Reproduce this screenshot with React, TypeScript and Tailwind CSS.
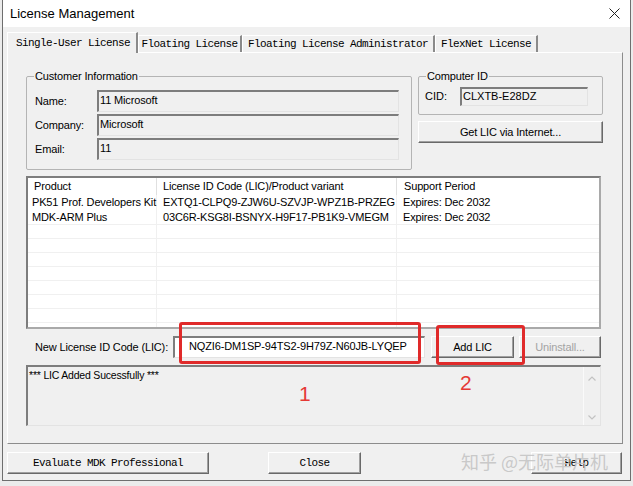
import React from 'react';

const sans = "font-['Liberation_Sans',Arial,sans-serif]";
const mono = "font-['Liberation_Mono','Courier_New',monospace]";

// classic win32 3D edges
const sunken =
  'border-t-2 border-l-2 border-r border-b border-t-[#7d7d7d] border-l-[#7d7d7d] border-r-[#e3e3e3] border-b-[#e3e3e3]';
const raised =
  'border border-t-white border-l-white border-r-[#696969] border-b-[#696969] shadow-[inset_-1px_-1px_0_#a0a0a0]';

const licenses = [
  ['PK51 Prof. Developers Kit', 'EXTQ1-CLPQ9-ZJW6U-SZVJP-WPZ1B-PRZEG', 'Expires: Dec 2032'],
  ['MDK-ARM Plus', '03C6R-KSG8I-BSNYX-H9F17-PB1K9-VMEGM', 'Expires: Dec 2032'],
];

function InfoRow({ label, value }: { label: string; value: string }) {
  return (
    <div className="flex items-center h-[22px]">
      <span className="w-[62px] text-[11px] tracking-[-0.15px]">{label}</span>
      <div className={`${sunken} w-[302px] h-[22px] pl-[1px] text-[11px] tracking-[-0.15px] leading-[16px]`}>
        {value}
      </div>
    </div>
  );
}

function Button({ children, className = '' }: { children: React.ReactNode; className?: string }) {
  return (
    <div className={`${raised} h-[22px] flex items-center justify-center bg-[#f0f0f0] ${className}`}>
      {children}
    </div>
  );
}

function Tab({ label, width, active }: { label: string; width: string; active?: boolean }) {
  return (
    <div
      className={`${width} ${
        active ? 'h-[21px] -mb-px relative z-10 pl-[8px]' : 'h-[17px] justify-center'
      } flex items-center bg-[#f0f0f0] border-t border-l border-t-white border-l-white border-r-2 border-r-[#8a8a8a] ${mono} text-[11px] tracking-[-0.6px] text-black whitespace-nowrap`}
    >
      {label}
    </div>
  );
}

export default function App() {
  return (
    <div className={`relative w-[633px] h-[486px] bg-[#ebebeb] overflow-hidden ${sans} text-black`}>
      <div className="ml-[2px] w-[629px] h-[481px] flex flex-col bg-[#f0f0f0] border-x border-b border-[#6e6e6e]">
        {/* title bar */}
        <div className="h-[27px] bg-white flex items-center justify-between pl-[7px] pr-[10px]">
          <span className="text-[13px] leading-none">License Management</span>
          <svg width="11" height="11" viewBox="0 0 11 11">
            <path d="M0.5 0.5 L10.5 10.5 M10.5 0.5 L0.5 10.5" stroke="#222" strokeWidth="1" />
          </svg>
        </div>

        <div className="pl-[4px] pt-[5px] flex flex-col">
          {/* tabs */}
          <div className="flex items-end h-[20px]">
            <Tab label="Single-User License" width="w-[131px]" active />
            <Tab label="Floating License" width="w-[104px]" />
            <Tab label="Floating License Administrator" width="w-[193px]" />
            <Tab label="FlexNet License" width="w-[103px]" />
          </div>

          {/* tab panel */}
          <div className="w-[616px] h-[392px] border border-t-white border-l-white border-r-[#8c8c8c] border-b-[#8c8c8c] pl-[18px] pt-[17px] flex flex-col">
            <div className="flex gap-[6px]">
              <fieldset className="w-[386px] border border-[#b4b4b4] rounded-[2px] pl-[8px] pr-[11px] pt-[7px] pb-[9px]">
                <legend className="-ml-px px-[1px] text-[11px] leading-[13px] tracking-[-0.15px]">
                  Customer Information
                </legend>
                <div className="flex flex-col gap-[2px]">
                  <InfoRow label="Name:" value="11 Microsoft" />
                  <InfoRow label="Company:" value="Microsoft" />
                  <InfoRow label="Email:" value="11" />
                </div>
              </fieldset>

              <div className="flex flex-col w-[185px]">
                <fieldset className="border border-[#b4b4b4] rounded-[2px] pl-[6px] pt-[4px] pb-[8px]">
                  <legend className="ml-[1px] px-[1px] text-[11px] leading-[13px] tracking-[-0.15px]">
                    Computer ID
                  </legend>
                  <div className="flex items-center">
                    <span className="w-[35px] text-[11px]">CID:</span>
                    <div className={`${sunken} w-[128px] h-[19px] pl-[1px] text-[11px] leading-[15px]`}>
                      CLXTB-E28DZ
                    </div>
                  </div>
                </fieldset>
                <Button className="mt-[6px] text-[11px] tracking-[-0.15px]">Get LIC via Internet...</Button>
              </div>
            </div>

            {/* license list */}
            <div className="mt-[6px] w-[575px] h-[153px] bg-white overflow-hidden flex flex-col border-2 border-t-[#7d7d7d] border-l-[#7d7d7d] border-r-[#a9a9a9] border-b-[#a9a9a9] text-[11px] tracking-[-0.15px]">
              <div className="grid grid-cols-[129px_240px_1fr] h-[17px] shrink-0 leading-[16px]">
                <div className="pl-[6px] border-r border-[#e0e0e0]">Product</div>
                <div className="pl-[6px] border-r border-[#e0e0e0]">License ID Code (LIC)/Product variant</div>
                <div className="pl-[7px]">Support Period</div>
              </div>
              {licenses.map((row, i) => (
                <div
                  key={row[0]}
                  className={`grid grid-cols-[129px_240px_1fr] h-[15px] shrink-0 leading-[15px] ${
                    i === licenses.length - 1 ? 'border-b border-[#f0f0f0]' : ''
                  }`}
                >
                  <div className="pl-[4px] border-r border-[#f0f0f0] whitespace-nowrap">{row[0]}</div>
                  <div className="pl-[6px] border-r border-[#f0f0f0] whitespace-nowrap">{row[1]}</div>
                  <div className="pl-[6px] whitespace-nowrap">{row[2]}</div>
                </div>
              ))}
              {[0, 1, 2, 3, 4, 5, 6, 7].map((n) => (
                <div key={n} className="grid grid-cols-[129px_240px_1fr] h-[14px] shrink-0 border-b border-[#f0f0f0]">
                  <div className="border-r border-[#f0f0f0]" />
                  <div className="border-r border-[#f0f0f0]" />
                  <div />
                </div>
              ))}
            </div>

            {/* new LIC row */}
            <div className="mt-[7px] flex items-center h-[22px] text-[11px] tracking-[-0.15px]">
              <span className="w-[147px] pl-[9px]">New License ID Code (LIC):</span>
              <div className={`${sunken} w-[252px] h-[22px] bg-white pl-[14px] leading-[17px]`}>
                NQZI6-DM1SP-94TS2-9H79Z-N60JB-LYQEP
              </div>
              <Button className="ml-[6px] w-[83px]">Add LIC</Button>
              <Button className="ml-[5px] w-[82px] text-[#a3a3a3]">Uninstall...</Button>
            </div>

            {/* output log */}
            <div className={`${sunken} mt-[7px] w-[575px] h-[61px] flex`}>
              <div className="flex-1 pl-[1px] pt-[2px] text-[10.5px] leading-[13px] tracking-[-0.2px]">
                *** LIC Added Sucessfully ***
              </div>
              <div className="w-[17px] border-l border-[#fafafa] flex flex-col items-center justify-between pt-[9px] pb-[5px]">
                <svg width="8" height="5" viewBox="0 0 8 5">
                  <path d="M0.5 4.5 L4 1 L7.5 4.5" fill="none" stroke="#c2c2c2" strokeWidth="1.2" />
                </svg>
                <svg width="8" height="5" viewBox="0 0 8 5">
                  <path d="M0.5 0.5 L4 4 L7.5 0.5" fill="none" stroke="#c2c2c2" strokeWidth="1.2" />
                </svg>
              </div>
            </div>
          </div>

          {/* bottom buttons */}
          <div className={`mt-[8px] flex ${mono} text-[11px] tracking-[-0.6px]`}>
            <Button className="w-[202px]">Evaluate MDK Professional</Button>
            <Button className="ml-[59px] w-[93px]">Close</Button>
            <Button className="ml-[170px] w-[91px]">Help</Button>
          </div>
        </div>
      </div>

      {/* annotations over the screenshot */}
      <div className="absolute left-[179px] top-[322px] w-[242px] h-[42px] border-[3px] border-[#e02a2a] rounded-[3px]" />
      <div className="absolute left-[436px] top-[325px] w-[89px] h-[40px] border-[3px] border-[#e02a2a] rounded-[3px]" />
      <span className="absolute left-[299px] top-[382px] text-[21px] leading-[24px] text-[#e53935]">1</span>
      <span className="absolute left-[460px] top-[371px] text-[21px] leading-[24px] text-[#e53935]">2</span>
      <span className="absolute left-[461px] top-[449px] text-[18px] leading-[24px] text-[#c4c4c4]/90 font-['Noto_Sans_CJK_SC',sans-serif] whitespace-nowrap">
        知乎 @无际单片机
      </span>
    </div>
  );
}
